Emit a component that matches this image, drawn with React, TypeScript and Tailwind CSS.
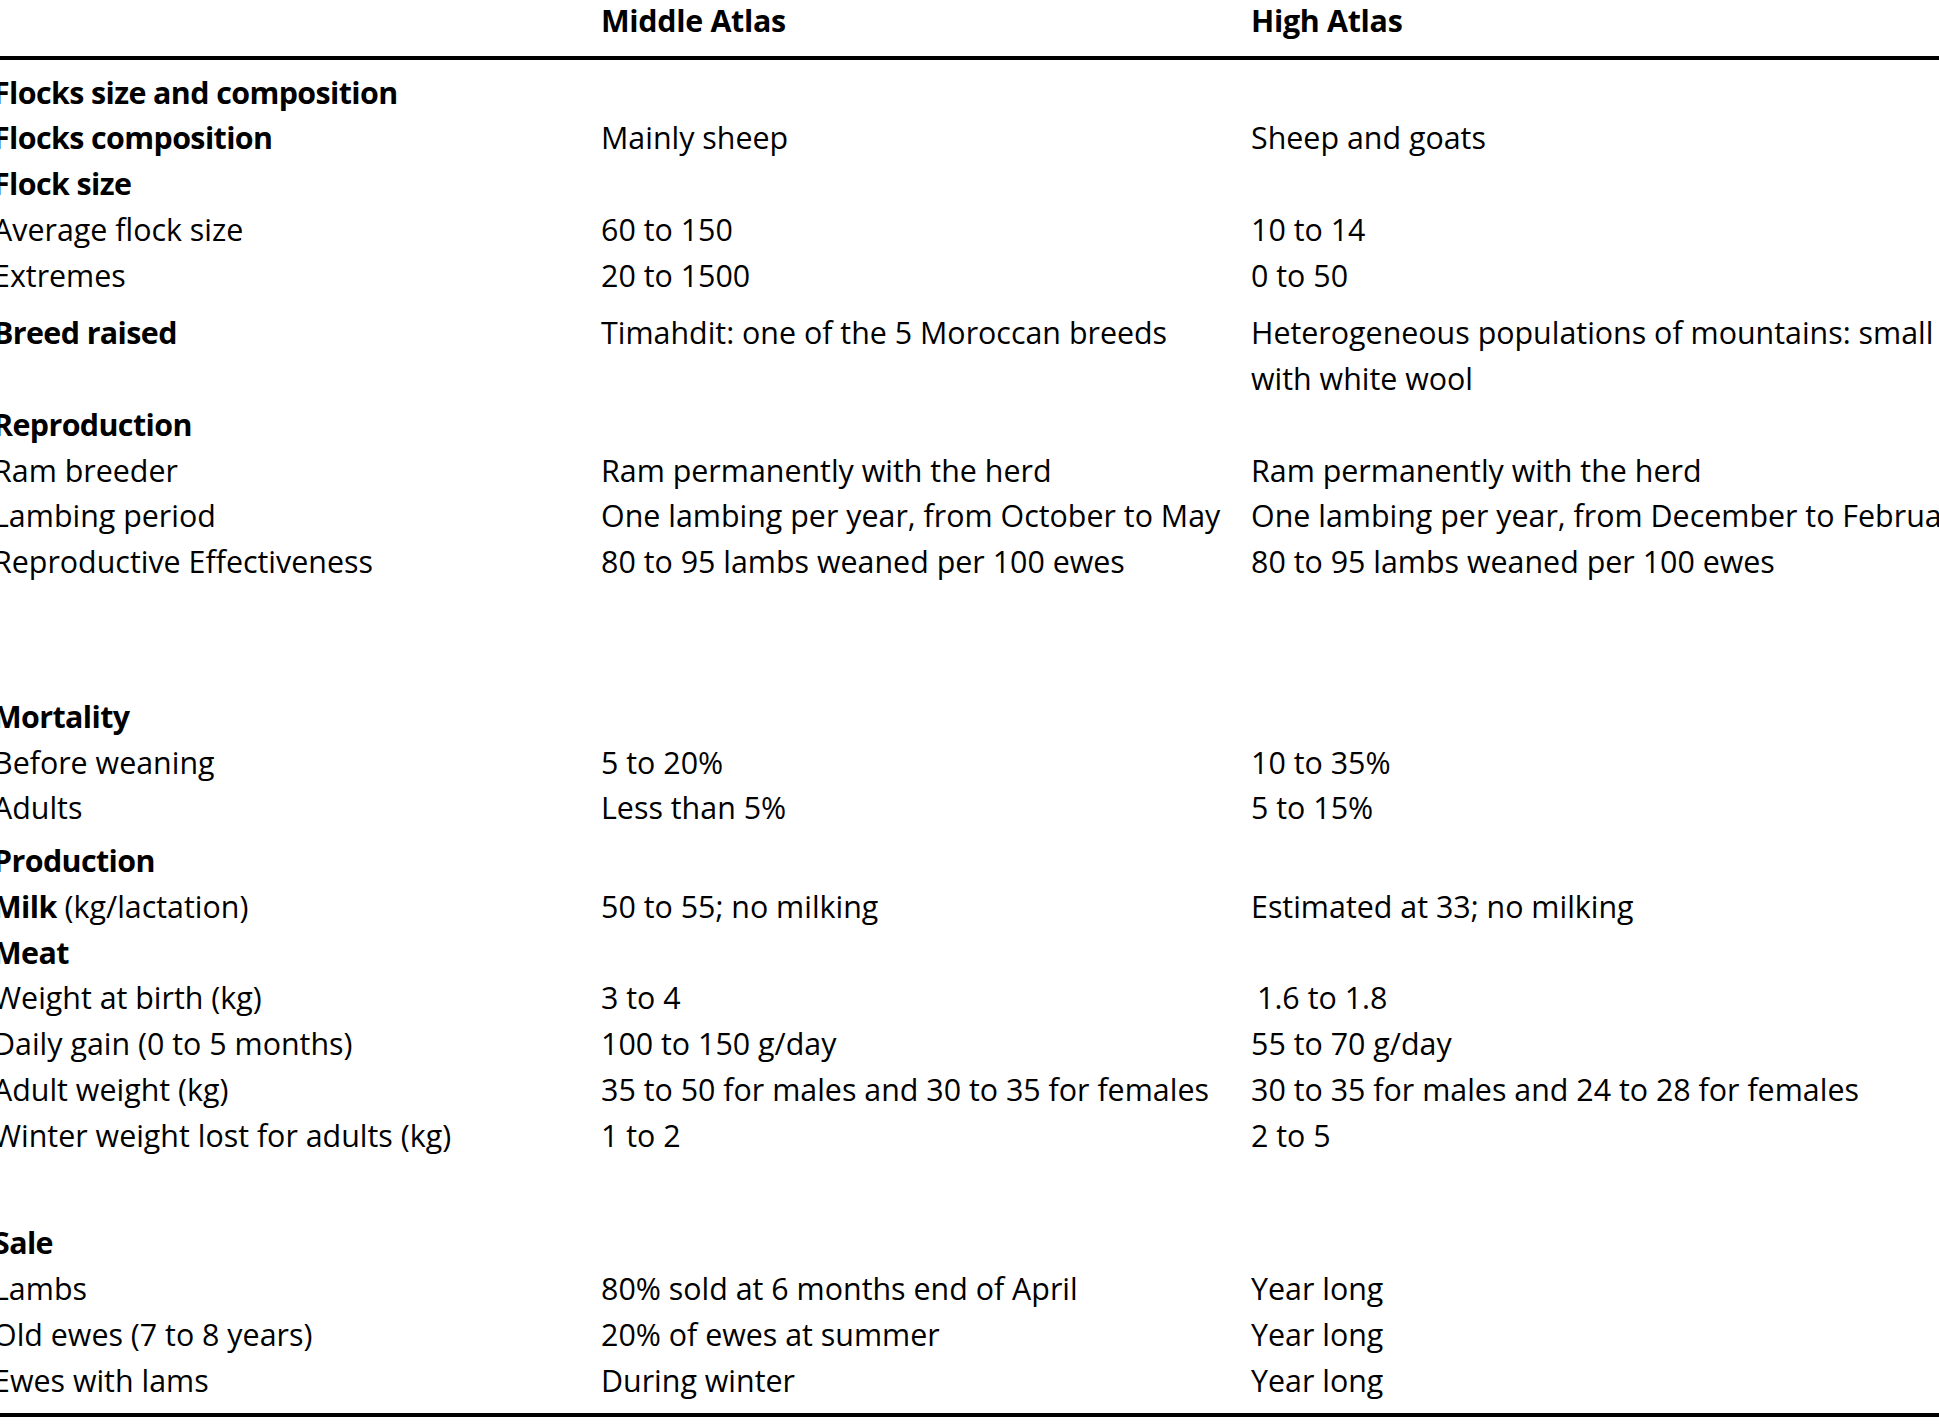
import React from "react";

type Row = {
  label: React.ReactNode;
  middle?: React.ReactNode;
  high?: React.ReactNode;
  bold?: boolean;
  gap?: string;
};

const rows: Row[] = [
  { label: "Flocks size and composition", bold: true },
  { label: "Flocks composition", middle: "Mainly sheep", high: "Sheep and goats", bold: true },
  { label: "Flock size", bold: true },
  { label: "Average flock size", middle: "60 to 150", high: "10 to 14" },
  { label: "Extremes", middle: "20 to 1500", high: "0 to 50" },
  {
    label: "Breed raised",
    middle: "Timahdit: one of the 5 Moroccan breeds",
    high: (
      <>
        <span className="block whitespace-nowrap">Heterogeneous populations of mountains: small</span>
        <span className="block">with white wool</span>
      </>
    ),
    bold: true,
    gap: "mt-[12px]",
  },
  { label: "Reproduction", bold: true },
  { label: "Ram breeder", middle: "Ram permanently with the herd", high: "Ram permanently with the herd" },
  {
    label: "Lambing period",
    middle: "One lambing per year, from October to May",
    high: "One lambing per year, from December to February",
  },
  {
    label: "Reproductive Effectiveness",
    middle: "80 to 95 lambs weaned per 100 ewes",
    high: "80 to 95 lambs weaned per 100 ewes",
  },
  { label: "Mortality", bold: true, gap: "mt-[109px]" },
  { label: "Before weaning", middle: "5 to 20%", high: "10 to 35%" },
  { label: "Adults", middle: "Less than 5%", high: "5 to 15%" },
  { label: "Production", bold: true, gap: "mt-[7px]" },
  {
    label: (
      <>
        <span className="font-bold tracking-[-0.6px]">Milk</span> (kg/lactation)
      </>
    ),
    middle: "50 to 55; no milking",
    high: "Estimated at 33; no milking",
  },
  { label: "Meat", bold: true },
  { label: "Weight at birth (kg)", middle: "3 to 4", high: <span className="pl-[6px]">1.6 to 1.8</span> },
  { label: "Daily gain (0 to 5 months)", middle: "100 to 150 g/day", high: "55 to 70 g/day" },
  {
    label: "Adult weight (kg)",
    middle: "35 to 50 for males and 30 to 35 for females",
    high: "30 to 35 for males and 24 to 28 for females",
  },
  { label: "Winter weight lost for adults (kg)", middle: "1 to 2", high: "2 to 5" },
  { label: "Sale", bold: true, gap: "mt-[62px]" },
  { label: "Lambs", middle: "80% sold at 6 months end of April", high: "Year long" },
  { label: "Old ewes (7 to 8 years)", middle: "20% of ewes at summer", high: "Year long" },
  { label: "Ewes with lams", middle: "During winter", high: "Year long" },
];

export default function App() {
  return (
    <div className="w-[1939px] h-[1424px] overflow-hidden bg-white text-black font-['Open_Sans',sans-serif] text-[30.4px]">
      <div className="-ml-[7px] w-[2100px]">
        <div className="grid grid-cols-[608px_650px_1fr] h-[60px] border-b-[4px] border-black font-bold tracking-[-0.3px] leading-[42.7px]">
          <div />
          <div>Middle Atlas</div>
          <div>High Atlas</div>
        </div>

        <div className="pt-[9.5px] pb-[10px] border-b-[4px] border-black leading-[45.75px]">
          {rows.map((row, i) => (
            <div key={i} className={`grid grid-cols-[608px_650px_1fr] ${row.gap ?? ""}`}>
              <div className={`whitespace-nowrap ${row.bold ? "font-bold tracking-[-0.6px]" : ""}`}>
                {row.label}
              </div>
              <div className="whitespace-nowrap">{row.middle}</div>
              <div className="whitespace-nowrap">{row.high}</div>
            </div>
          ))}
        </div>
      </div>
    </div>
  );
}
